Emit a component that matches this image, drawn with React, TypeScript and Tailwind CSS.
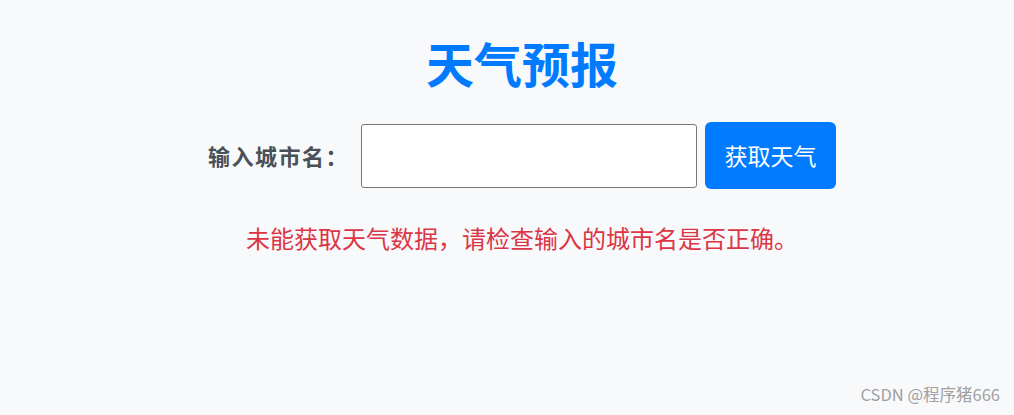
import { useState } from "react";

export default function App() {
  const [city, setCity] = useState("");

  return (
    <div
      className="relative min-h-[415px] bg-[#f8f9fa] pl-[30px] flex flex-col items-center"
      style={{ fontFamily: '"Noto Sans CJK SC", "Liberation Sans", sans-serif' }}
    >
      {/* 标题 */}
      <h1 className="mt-[34px] text-[48px] leading-[56px] font-bold text-[#007bff]">天气预报</h1>

      {/* 输入行 */}
      <div className="mt-[32px] flex items-center">
        <label className="mr-[12px] text-[22px] font-bold text-[#495057] tracking-[1.5px]">输入城市名：</label>
        <input
          value={city}
          onChange={(e) => setCity(e.target.value)}
          className="w-[336px] h-[64px] border border-[#767676] rounded-[3px] bg-white px-3 text-[20px] outline-none"
        />
        <button className="ml-[8px] w-[131px] h-[67px] rounded-[6px] bg-[#007bff] text-white text-[23px]">
          获取天气
        </button>
      </div>

      {/* 错误提示 */}
      <p className="mt-[33px] text-[24px] leading-[32px] text-[#dc3545]">
        未能获取天气数据，请检查输入的城市名是否正确。
      </p>

      <span className="absolute right-[14px] bottom-[8px] text-[16.5px] text-[#a0a0a0]">CSDN @程序猪666</span>
    </div>
  );
}
